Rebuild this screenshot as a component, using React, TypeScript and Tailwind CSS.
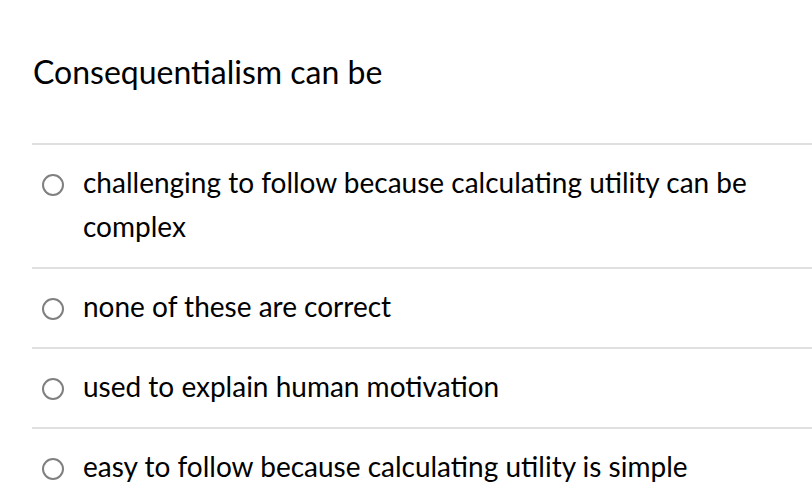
import React from "react";

const options = [
  "challenging to follow because calculating utility can be complex",
  "none of these are correct",
  "used to explain human motivation",
  "easy to follow because calculating utility is simple",
];

export default function App() {
  return (
    <div className="w-[812px] h-[502px] overflow-hidden bg-white text-black" style={{ fontFamily: "Lato, 'Noto Sans', sans-serif" }}>
      <div className="pl-[33px] pt-[51px] h-[143px] text-[32px] leading-[42px]">Consequentialism can be</div>
      <div className="ml-[32px]">
        {options.map((o, i) => (
          <div key={i} className="border-t-2 border-[#e0e0e0] py-[17px] pr-[20px] flex items-start">
            <div className="w-[51px] h-[44px] flex items-center shrink-0">
              <div className="ml-[10px] mt-[2px] w-[22px] h-[22px] rounded-full border-[2px] border-[#808080]" />
            </div>
            <div className="text-[28px] leading-[44px] mt-[-2px] mb-[2px]">{o}</div>
          </div>
        ))}
      </div>
    </div>
  );
}
